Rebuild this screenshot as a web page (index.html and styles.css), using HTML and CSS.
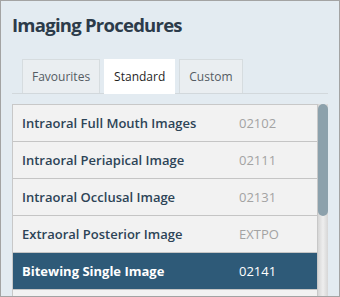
FILE: index.html
```html
<!DOCTYPE html>
<html>
<head>
<meta charset="utf-8">
<link rel="stylesheet" href="styles.css">
</head>
<body>
<div class="panel">
  <h1 class="title">Imaging Procedures</h1>
  <div class="tabs">
    <div class="tab">Favourites</div>
    <div class="tab active">Standard</div>
    <div class="tab">Custom</div>
  </div>
  <div class="listbox">
    <div class="list">
      <div class="row"><span class="name">Intraoral Full Mouth Images</span><span class="code">02102</span></div>
      <div class="row"><span class="name">Intraoral Periapical Image</span><span class="code">02111</span></div>
      <div class="row"><span class="name">Intraoral Occlusal Image</span><span class="code">02131</span></div>
      <div class="row"><span class="name">Extraoral Posterior Image</span><span class="code">EXTPO</span></div>
      <div class="row selected"><span class="name">Bitewing Single Image</span><span class="code">02141</span></div>
      <div class="row"></div>
    </div>
    <div class="scrollbar"><div class="thumb"></div></div>
  </div>
</div>
</body>
</html>
```

FILE: styles.css
```css
html, body {
  margin: 0;
  padding: 0;
}
body {
  font-family: "Open Sans", "Noto Sans", sans-serif;
}
.panel {
  width: 340px;
  height: 297px;
  box-sizing: border-box;
  border: 1px solid #a3a3a3;
  background: #e3ebf1;
  padding: 0 11px 0 11px;
  overflow: hidden;
}
.title {
  margin: 0;
  padding-top: 12px;
  height: 58px;
  box-sizing: border-box;
  font-size: 18.5px;
  letter-spacing: -0.75px;
  font-weight: 700;
  color: #2c3b4a;
  line-height: 24px;
}
.tabs {
  display: flex;
  gap: 4px;
  padding-left: 10px;
  border-bottom: 1px solid #d2d8dc;
  height: 34px;
}
.tab {
  box-sizing: border-box;
  height: 34px;
  border: 1px solid #d6dcdf;
  border-bottom: none;
  background: #eaeef1;
  color: #555c63;
  font-size: 12px;
  line-height: 34px;
  padding: 0 9px;
}
.tab.active {
  background: #ffffff;
  border-color: #ffffff;
  color: #1f1f1f;
  height: 35px;
}
.listbox {
  margin-top: 10px;
  display: flex;
  width: 316px;
  height: 200px;
}
.list {
  width: 305px;
  border-top: 1px solid #c8c8c8;
  border-left: 1px solid #c8c8c8;
  border-right: 1px solid #c8c8c8;
}
.row {
  display: flex;
  align-items: center;
  height: 36px;
  border-bottom: 1px solid #c5c5c5;
  background: #f2f2f2;
  padding-left: 9px;
  font-size: 13px;
}
.name {
  width: 217px;
  font-weight: 600;
  color: #2d4457;
  white-space: nowrap;
}
.code {
  color: #a3a3a3;
}
.row.selected {
  background: #2e5a78;
}
.row.selected .name {
  color: #ffffff;
  font-weight: 700;
}
.row.selected .code {
  color: #ffffff;
}
.scrollbar {
  width: 10px;
  background: linear-gradient(to right, #d6d6d6, #eeeeee 50%, #d6d6d6);
  position: relative;
}
.thumb {
  position: absolute;
  left: 0;
  top: 0;
  width: 10px;
  height: 112px;
  border-radius: 5px;
  background: #8ca1ac;
}
```
